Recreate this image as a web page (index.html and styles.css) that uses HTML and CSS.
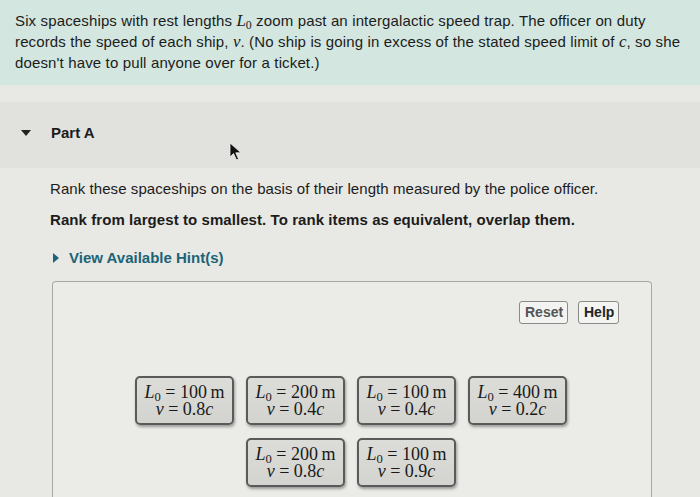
FILE: index.html
```html
<!DOCTYPE html>
<html>
<head>
<meta charset="utf-8">
<link rel="stylesheet" href="styles.css">
</head>
<body>
<div class="intro">
  <p>Six spaceships with rest lengths <span class="m"><i>L</i><sub>0</sub></span> zoom past an intergalactic speed trap. The officer on duty records the speed of each ship, <span class="m"><i>v</i></span>. (No ship is going in excess of the stated speed limit of <span class="m"><i>c</i></span>, so she doesn't have to pull anyone over for a ticket.)</p>
</div>
<section class="part">
  <div class="part-head">
    <span class="caret"></span>
    <span class="part-title">Part A</span>
  </div>
  <div class="part-body">
    <p class="q">Rank these spaceships on the basis of their length measured by the police officer.</p>
    <p class="q strong">Rank from largest to smallest. To rank items as equivalent, overlap them.</p>
    <div class="hint"><span class="hint-caret"></span>View Available Hint(s)</div>
    <div class="workspace">
      <div class="tools">
        <span class="btn reset">Reset</span>
        <span class="btn help">Help</span>
      </div>
      <div class="tiles">
        <div class="tile"><div><i>L</i><sub>0</sub><span class="eq">=</span>100&#8239;m</div><div><i>v</i><span class="eq">=</span>0.8<i>c</i></div></div>
        <div class="tile"><div><i>L</i><sub>0</sub><span class="eq">=</span>200&#8239;m</div><div><i>v</i><span class="eq">=</span>0.4<i>c</i></div></div>
        <div class="tile"><div><i>L</i><sub>0</sub><span class="eq">=</span>100&#8239;m</div><div><i>v</i><span class="eq">=</span>0.4<i>c</i></div></div>
        <div class="tile"><div><i>L</i><sub>0</sub><span class="eq">=</span>400&#8239;m</div><div><i>v</i><span class="eq">=</span>0.2<i>c</i></div></div>
        <div class="tile"><div><i>L</i><sub>0</sub><span class="eq">=</span>200&#8239;m</div><div><i>v</i><span class="eq">=</span>0.8<i>c</i></div></div>
        <div class="tile"><div><i>L</i><sub>0</sub><span class="eq">=</span>100&#8239;m</div><div><i>v</i><span class="eq">=</span>0.9<i>c</i></div></div>
      </div>
    </div>
  </div>
  <svg class="cursor" width="14" height="20" viewBox="0 0 14 20"><path d="M1 1 L1 15 L4.5 11.5 L7.5 18 L9.5 17 L6.8 10.8 L12 10.8 Z" fill="#111" stroke="#eee" stroke-width="0.8"/></svg>
</section>
</body>
</html>
```
FILE: styles.css
```css
html, body {
  margin: 0;
  padding: 0;
  background: #e8e8e4;
  font-family: "Liberation Sans", Arial, sans-serif;
  color: #1c1c1c;
  width: 700px;
  height: 497px;
  overflow: hidden;
}
p { margin: 0; }
.intro {
  background: #d3e6df;
  padding: 10px 12px 12px 15px;
  font-size: 15px;
  line-height: 21px;
  letter-spacing: 0.14px;
}
.m {
  font-family: "Liberation Serif", "Times New Roman", serif;
  font-size: 17px;
  letter-spacing: 0;
}
.m sub, .tile sub {
  font-size: 0.7em;
  font-style: normal;
  vertical-align: -0.25em;
  line-height: 0;
}
.part {
  position: relative;
  margin-top: 17px;
}
.part-head {
  background: #e1e1dd;
  height: 66px;
  box-sizing: border-box;
  padding: 20px 0 0 21px;
  display: flex;
  align-items: flex-start;
}
.caret {
  width: 0;
  height: 0;
  border-left: 5px solid transparent;
  border-right: 5px solid transparent;
  border-top: 6px solid #222;
  margin-top: 8px;
  margin-right: 20px;
}
.part-title {
  font-weight: bold;
  font-size: 15px;
  line-height: 21px;
}
.part-body {
  padding: 10px 0 0 50px;
}
.q {
  font-size: 15px;
  line-height: 21px;
  letter-spacing: 0.07px;
}
.q.strong {
  font-weight: bold;
  margin-top: 10px;
}
.hint {
  margin-top: 17px;
  color: #1b6478;
  font-weight: bold;
  font-size: 15px;
  line-height: 21px;
  display: flex;
  align-items: center;
  padding-left: 3px;
}
.hint-caret {
  width: 0;
  height: 0;
  border-top: 5px solid transparent;
  border-bottom: 5px solid transparent;
  border-left: 6px solid #1b6478;
  margin-right: 10px;
}
.workspace {
  margin-top: 13px;
  margin-left: 2px;
  width: 600px;
  height: 216px;
  box-sizing: border-box;
  border: 1px solid #a8a8a4;
  border-bottom: none;
  border-radius: 4px 4px 0 0;
  background: #ebebe8;
  padding: 19px 32px 0 0;
}
.tools {
  display: flex;
  justify-content: flex-end;
  gap: 10px;
}
.btn {
  display: inline-block;
  height: 23px;
  box-sizing: border-box;
  border: 1px solid #8a8a8a;
  border-radius: 3px;
  background: #f3f3f1;
  font-size: 14px;
  line-height: 21px;
  padding: 0 5px;
  text-align: center;
}
.reset { width: 49px; color: #555; font-weight: bold; }
.help { width: 41px; color: #222; font-weight: bold; }
.tiles {
  margin: 52px 0 0 80px;
  width: 436px;
  display: flex;
  flex-wrap: wrap;
  justify-content: center;
  column-gap: 12px;
  row-gap: 13px;
}
.tile {
  width: 99px;
  height: 49px;
  box-sizing: border-box;
  border: 2px solid #5a5a5a;
  border-radius: 5px;
  background: linear-gradient(#dcdcd8, #d3d3cf);
  box-shadow: 1px 2px 3px rgba(0,0,0,0.35);
  font-family: "Liberation Serif", "Times New Roman", serif;
  font-size: 18px;
  line-height: 17px;
  color: #1a1a1a;
  display: flex;
  flex-direction: column;
  justify-content: center;
  align-items: center;
}
.eq {
  margin: 0 0.25em;
}
.cursor {
  position: absolute;
  left: 229px;
  top: 40px;
}
```
